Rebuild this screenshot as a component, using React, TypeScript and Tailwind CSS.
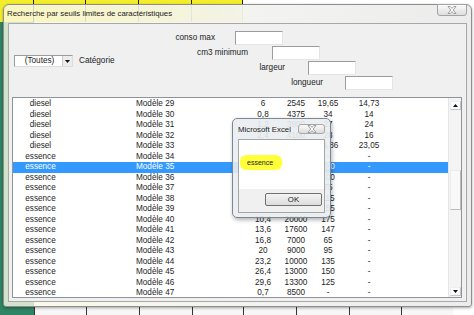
import React from "react";

type Row = [string, string, string, string, string, string];

const rows: Row[] = [
  ["diesel", "Modèle 29", "6", "2545", "19,65", "14,73"],
  ["diesel", "Modèle 30", "0,8", "4375", "34", "14"],
  ["diesel", "Modèle 31", "1,2", "3900", "27", "24"],
  ["diesel", "Modèle 32", "2,4", "4100", "28", "16"],
  ["diesel", "Modèle 33", "3", "5200", "18,86", "23,05"],
  ["essence", "Modèle 34", "0,8", "6000", "-", "-"],
  ["essence", "Modèle 35", "1,6", "8000", "100", "-"],
  ["essence", "Modèle 36", "2,4", "9000", "100", "-"],
  ["essence", "Modèle 37", "4", "9500", "75", "-"],
  ["essence", "Modèle 38", "5,6", "11000", "115", "-"],
  ["essence", "Modèle 39", "7,2", "12000", "155", "-"],
  ["essence", "Modèle 40", "10,4", "20000", "175", "-"],
  ["essence", "Modèle 41", "13,6", "17600", "147", "-"],
  ["essence", "Modèle 42", "16,8", "7000", "65", "-"],
  ["essence", "Modèle 43", "20", "9000", "95", "-"],
  ["essence", "Modèle 44", "23,2", "10000", "135", "-"],
  ["essence", "Modèle 45", "26,4", "13000", "150", "-"],
  ["essence", "Modèle 46", "29,6", "13300", "125", "-"],
  ["essence", "Modèle 47", "0,7", "8500", "-", "-"],
];

const CloseGlyph = () => (
  <svg width="10" height="8" viewBox="0 0 10 8">
    <polygon
      points="1,0.5 3.2,0.5 5,2.4 6.8,0.5 9,0.5 6.2,4 9,7.5 6.8,7.5 5,5.6 3.2,7.5 1,7.5 3.8,4"
      fill="#ffffff"
      stroke="#8a8a8a"
      strokeWidth="0.8"
    />
  </svg>
);

const TextBox = () => (
  <div className="w-[48px] h-[14px] bg-white border border-t-[#9c9c9c] border-l-[#9c9c9c] border-r-[#e4e4e4] border-b-[#e4e4e4]" />
);

const Field = ({ label, labelW, gap }: { label: string; labelW: string; gap: string }) => (
  <div className="flex items-center h-[15px]">
    <span className={`${labelW} text-right text-[8.2px] leading-[10px] text-[#222]`}>{label}</span>
    <span className={gap} />
    <TextBox />
  </div>
);

export default function App() {
  return (
    <div className="relative w-[474px] h-[315px] overflow-hidden bg-white font-['Liberation_Sans',Arial,sans-serif]">
      {/* spreadsheet behind the windows */}
      <div className="absolute inset-0 flex flex-col">
        <div className="h-[22px] flex">
          {[34, 52, 53, 53, 51].map((w, i) => (
            <div key={i} style={{ width: w }} className="h-full bg-[#f4ee2a] border-r border-[#222]" />
          ))}
          <div className="flex-1 bg-white" />
        </div>
        <div className="flex-1 flex">
          <div className="w-[34px] bg-[#2f8463] border-r border-[#1f5a43]" />
          <div className="flex-1 bg-white" />
        </div>
        <div className="h-[9px] flex">
          <div className="w-[34px] bg-[#2f8463]" />
          {[52, 53, 53, 51, 53, 53, 52, 52].map((w, i) => (
            <div key={i} style={{ width: w }} className="h-full bg-[#f7f7f7] border-l border-[#333]" />
          ))}
        </div>
      </div>

      {/* main window */}
      <div className="absolute left-[3px] top-[4px] w-[469px] h-[303px] rounded-t-[6px] rounded-b-[3px] border border-[#8e8e8e] bg-gradient-to-r from-[#fbf9e4]/80 via-[#f3f3f0]/95 to-[#ececec] flex flex-col px-[4px] pb-[4px] shadow-[0_1px_3px_rgba(0,0,0,0.35)]">
        <div className="h-[18px] flex items-start justify-between">
          <span className="mt-[4px] -ml-[1px] text-[7.8px] leading-[10px] text-[#1a1a1a]">
            Recherche par seuils limites de caractéristiques
          </span>
          <div className="w-[30px] h-[12px] -mt-[1px] rounded-b-[3px] border border-[#a3a3a3] bg-gradient-to-b from-[#fafafa] to-[#dedede] flex items-center justify-center">
            <CloseGlyph />
          </div>
        </div>

        <div className="flex-1 bg-[#f0f0f0] border border-[#a8a8a8] flex flex-col">
          {/* criteria */}
          <div className="flex h-[73px]">
            <div className="w-[130px] pl-[5px] pt-[31px] flex items-start gap-[6px]">
              <div className="w-[59px] h-[12px] bg-white border border-t-[#9c9c9c] border-l-[#9c9c9c] border-r-[#dcdcdc] border-b-[#dcdcdc] flex">
                <span className="flex-1 pl-[2px] text-center text-[8.2px] leading-[10px] text-[#222]">(Toutes)</span>
                <div className="w-[10px] h-full bg-[#ececec] border-l border-[#c8c8c8] flex items-center justify-center">
                  <svg width="5" height="3" viewBox="0 0 5 3">
                    <polygon points="0,0 5,0 2.5,3" fill="#111" />
                  </svg>
                </div>
              </div>
              <span className="text-[8.2px] leading-[12px] text-[#222]">Catégorie</span>
            </div>
            <div className="flex flex-col pt-[6px]">
              <Field label="conso max" labelW="w-[76px]" gap="w-[20px]" />
              <Field label="cm3 minimum" labelW="w-[109px]" gap="w-[24px]" />
              <Field label="largeur" labelW="w-[146px]" gap="w-[23px]" />
              <Field label="longueur" labelW="w-[184px]" gap="w-[22px]" />
            </div>
          </div>

          {/* list box */}
          <div className="ml-[3px] mr-[4px] h-[201px] bg-white border border-[#8f949a] flex overflow-hidden">
            <div className="flex-1 pt-[1px] overflow-hidden">
              {rows.map((r, i) => {
                const sel = r[1] === "Modèle 35";
                return (
                  <div
                    key={i}
                    className={`grid grid-cols-[55px_178px_34px_32px_32px_50px] h-[10.5px] text-[8.2px] leading-[10.5px] ${
                      sel ? "bg-[#3399ff] text-white" : "text-[#1e1e1e]"
                    }`}
                  >
                    <span className="text-center">{r[0]}</span>
                    <span className="pl-[68px]">{r[1]}</span>
                    <span className="text-center">{r[2]}</span>
                    <span className="text-center">{r[3]}</span>
                    <span className="text-center">{r[4]}</span>
                    <span className="text-center">{r[5]}</span>
                  </div>
                );
              })}
            </div>
            <div className="w-[13px] bg-[#f4f4f4] border-l border-[#e6e6e6] flex flex-col items-center pt-[3px] pb-[1px]">
              <div className="w-[11px] h-[9px] bg-[#fbfbfb] border border-[#c4c4c4] border-t-[#efefef] border-l-[#efefef] flex items-center justify-center">
                <svg width="5" height="3" viewBox="0 0 5 3">
                  <polygon points="0,3 5,3 2.5,0" fill="#111" />
                </svg>
              </div>
              <div className="h-[60px]" />
              <div className="w-[11px] h-[40px] bg-[#f9f9f9] border border-[#bcbcbc] border-t-[#ececec] border-l-[#ececec]" />
              <div className="flex-1" />
              <div className="w-[11px] h-[9px] bg-[#fbfbfb] border border-[#c4c4c4] border-t-[#efefef] border-l-[#efefef] flex items-center justify-center">
                <svg width="5" height="3" viewBox="0 0 5 3">
                  <polygon points="0,0 5,0 2.5,3" fill="#111" />
                </svg>
              </div>
            </div>
          </div>
        </div>
      </div>

      {/* message box */}
      <div className="absolute left-[232px] top-[118px] w-[99px] h-[100px] rounded-[5px] border border-[#7d8793] bg-[#e9edf1]/90 shadow-[1px_2px_4px_rgba(0,0,0,0.3)] flex flex-col px-[5px] pb-[4px]">
        <div className="h-[20px] flex items-start justify-between">
          <span className="mt-[6px] text-[7.8px] leading-[10px] text-[#1a1a1a]">Microsoft Excel</span>
          <div className="w-[27px] h-[10px] mt-[5px] rounded-[3px] border border-[#a8a8a8] bg-gradient-to-b from-[#fafafa] to-[#dcdcdc] flex items-center justify-center">
            <CloseGlyph />
          </div>
        </div>
        <div className="flex-1 border border-[#a6a6a6] flex flex-col">
          <div className="h-[49px] bg-white pt-[15px] pl-[1px] flex items-start">
            <span className="block h-[15px] pl-[7px] pr-[9px] rounded-[6px] bg-[#ffff3a] text-[7px] leading-[15px] text-[#222]">
              essence
            </span>
          </div>
          <div className="flex-1 bg-[#f0f0f0] flex items-start justify-end pt-[4px] pr-[2px]">
            <div className="w-[57px] h-[13px] rounded-[2px] border border-[#707070] bg-gradient-to-b from-[#f4f4f4] to-[#dddddd] flex items-center justify-center text-[7.8px] text-[#1a1a1a]">
              OK
            </div>
          </div>
        </div>
      </div>
    </div>
  );
}
